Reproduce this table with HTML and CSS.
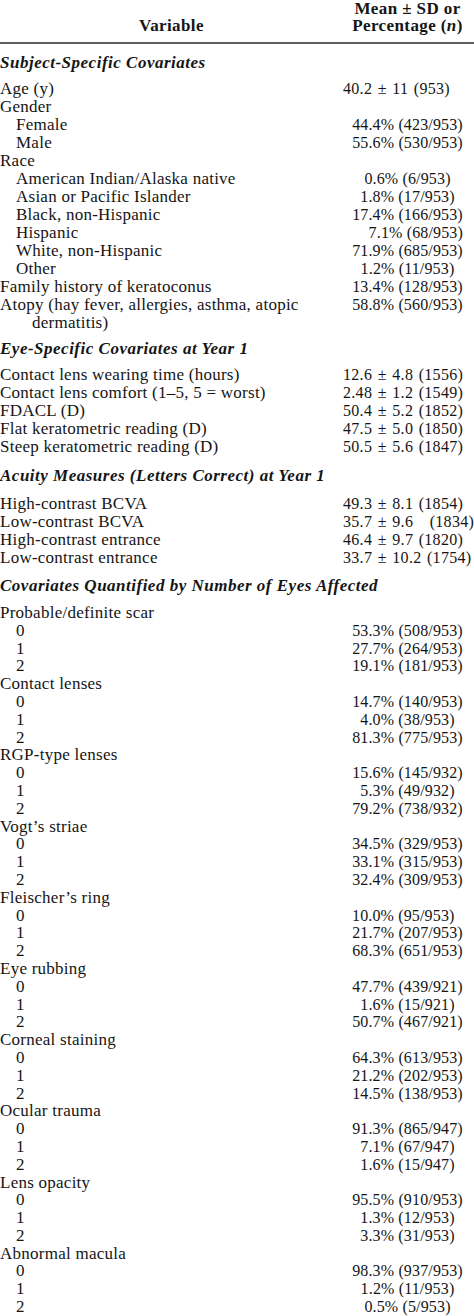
FILE: index.html
```
<!DOCTYPE html>
<html lang="en">
<head>
<meta charset="utf-8">
<title>Covariates table</title>
<link rel="stylesheet" href="styles.css">
</head>
<body>
<div class="table">
  <div class="head">
    <div class="head-var">Variable</div>
    <div class="head-val">Mean ± SD or<br>Percentage (<i>n</i>)</div>
  </div>
  <div class="rule"></div>

  <section class="sec sec-subject">
    <div class="heading">Subject-Specific Covariates</div>
    <div class="row"><div class="lab">Age (y)</div><div class="val pm">40.2 ± 11 (953)</div></div>
    <div class="row"><div class="lab">Gender</div><div class="val"></div></div>
    <div class="row"><div class="lab i1">Female</div><div class="val">44.4% (423/953)</div></div>
    <div class="row"><div class="lab i1">Male</div><div class="val">55.6% (530/953)</div></div>
    <div class="row"><div class="lab">Race</div><div class="val"></div></div>
    <div class="row"><div class="lab i1">American Indian/Alaska native</div><div class="val">0.6% (6/953)</div></div>
    <div class="row"><div class="lab i1">Asian or Pacific Islander</div><div class="val">1.8% (17/953)</div></div>
    <div class="row"><div class="lab i1">Black, non-Hispanic</div><div class="val">17.4% (166/953)</div></div>
    <div class="row"><div class="lab i1">Hispanic</div><div class="val r">7.1% (68/953)</div></div>
    <div class="row"><div class="lab i1">White, non-Hispanic</div><div class="val">71.9% (685/953)</div></div>
    <div class="row"><div class="lab i1">Other</div><div class="val">1.2% (11/953)</div></div>
    <div class="row"><div class="lab">Family history of keratoconus</div><div class="val">13.4% (128/953)</div></div>
    <div class="row"><div class="lab hang">Atopy (hay fever, allergies, asthma, atopic<br>dermatitis)</div><div class="val">58.8% (560/953)</div></div>
  </section>

  <section class="sec sec-eye">
    <div class="heading">Eye-Specific Covariates at Year 1</div>
    <div class="row"><div class="lab">Contact lens wearing time (hours)</div><div class="val pm">12.6 ± 4.8 (1556)</div></div>
    <div class="row"><div class="lab">Contact lens comfort (1–5, 5 = worst)</div><div class="val pm">2.48 ± 1.2 (1549)</div></div>
    <div class="row"><div class="lab">FDACL (D)</div><div class="val pm">50.4 ± 5.2 (1852)</div></div>
    <div class="row"><div class="lab">Flat keratometric reading (D)</div><div class="val pm">47.5 ± 5.0 (1850)</div></div>
    <div class="row"><div class="lab">Steep keratometric reading (D)</div><div class="val pm">50.5 ± 5.6 (1847)</div></div>
  </section>

  <section class="sec sec-acuity">
    <div class="heading">Acuity Measures (Letters Correct) at Year 1</div>
    <div class="row"><div class="lab">High-contrast BCVA</div><div class="val pm">49.3 ± 8.1 (1854)</div></div>
    <div class="row"><div class="lab">Low-contrast BCVA</div><div class="val pm">35.7 ± 9.6   (1834)</div></div>
    <div class="row"><div class="lab">High-contrast entrance</div><div class="val pm">46.4 ± 9.7 (1820)</div></div>
    <div class="row"><div class="lab">Low-contrast entrance</div><div class="val pm">33.7 ± 10.2 (1754)</div></div>
  </section>

  <section class="sec sec-eyes">
    <div class="heading">Covariates Quantified by Number of Eyes Affected</div>
    <div class="row"><div class="lab">Probable/definite scar</div><div class="val"></div></div>
    <div class="row"><div class="lab i1">0</div><div class="val">53.3% (508/953)</div></div>
    <div class="row"><div class="lab i1">1</div><div class="val">27.7% (264/953)</div></div>
    <div class="row"><div class="lab i1">2</div><div class="val">19.1% (181/953)</div></div>
    <div class="row"><div class="lab">Contact lenses</div><div class="val"></div></div>
    <div class="row"><div class="lab i1">0</div><div class="val">14.7% (140/953)</div></div>
    <div class="row"><div class="lab i1">1</div><div class="val">4.0% (38/953)</div></div>
    <div class="row"><div class="lab i1">2</div><div class="val">81.3% (775/953)</div></div>
    <div class="row"><div class="lab">RGP-type lenses</div><div class="val"></div></div>
    <div class="row"><div class="lab i1">0</div><div class="val">15.6% (145/932)</div></div>
    <div class="row"><div class="lab i1">1</div><div class="val">5.3% (49/932)</div></div>
    <div class="row"><div class="lab i1">2</div><div class="val">79.2% (738/932)</div></div>
    <div class="row"><div class="lab">Vogt’s striae</div><div class="val"></div></div>
    <div class="row"><div class="lab i1">0</div><div class="val">34.5% (329/953)</div></div>
    <div class="row"><div class="lab i1">1</div><div class="val">33.1% (315/953)</div></div>
    <div class="row"><div class="lab i1">2</div><div class="val">32.4% (309/953)</div></div>
    <div class="row"><div class="lab">Fleischer’s ring</div><div class="val"></div></div>
    <div class="row"><div class="lab i1">0</div><div class="val l">10.0% (95/953)</div></div>
    <div class="row"><div class="lab i1">1</div><div class="val">21.7% (207/953)</div></div>
    <div class="row"><div class="lab i1">2</div><div class="val">68.3% (651/953)</div></div>
    <div class="row"><div class="lab">Eye rubbing</div><div class="val"></div></div>
    <div class="row"><div class="lab i1">0</div><div class="val">47.7% (439/921)</div></div>
    <div class="row"><div class="lab i1">1</div><div class="val">1.6% (15/921)</div></div>
    <div class="row"><div class="lab i1">2</div><div class="val">50.7% (467/921)</div></div>
    <div class="row"><div class="lab">Corneal staining</div><div class="val"></div></div>
    <div class="row"><div class="lab i1">0</div><div class="val">64.3% (613/953)</div></div>
    <div class="row"><div class="lab i1">1</div><div class="val">21.2% (202/953)</div></div>
    <div class="row"><div class="lab i1">2</div><div class="val">14.5% (138/953)</div></div>
    <div class="row"><div class="lab">Ocular trauma</div><div class="val"></div></div>
    <div class="row"><div class="lab i1">0</div><div class="val">91.3% (865/947)</div></div>
    <div class="row"><div class="lab i1">1</div><div class="val">7.1% (67/947)</div></div>
    <div class="row"><div class="lab i1">2</div><div class="val">1.6% (15/947)</div></div>
    <div class="row"><div class="lab">Lens opacity</div><div class="val"></div></div>
    <div class="row"><div class="lab i1">0</div><div class="val">95.5% (910/953)</div></div>
    <div class="row"><div class="lab i1">1</div><div class="val">1.3% (12/953)</div></div>
    <div class="row"><div class="lab i1">2</div><div class="val">3.3% (31/953)</div></div>
    <div class="row"><div class="lab">Abnormal macula</div><div class="val"></div></div>
    <div class="row"><div class="lab i1">0</div><div class="val">98.3% (937/953)</div></div>
    <div class="row"><div class="lab i1">1</div><div class="val">1.2% (11/953)</div></div>
    <div class="row"><div class="lab i1">2</div><div class="val">0.5% (5/953)</div></div>
  </section>
</div>
</body>
</html>
```

FILE: styles.css
```
html, body {
  margin: 0;
  padding: 0;
  background: #ffffff;
  overflow: hidden;
}

body {
  width: 474px;
  font-family: "Liberation Serif", "Times New Roman", serif;
  font-size: 16px;
  color: #151515;
}

.table {
  width: 474px;
}

.head {
  display: grid;
  grid-template-columns: 1fr 131px;
  align-items: end;
  font-weight: bold;
  font-size: 17px;
  letter-spacing: 0.4px;
  line-height: 17px;
}

.head-var {
  text-align: center;
}

.head-val {
  text-align: center;
  padding: 0 8px 0 6px;
  white-space: nowrap;
}

.rule {
  margin-top: 8px;
  height: 2px;
  background: #5e5e5e;
}

.sec-subject { margin-top: 10px; }
.sec-eye { margin-top: 8px; }
.sec-acuity { margin-top: 11px; }
.sec-eyes { margin-top: 10px; }

.heading {
  font-weight: bold;
  font-style: italic;
  font-size: 17px;
  letter-spacing: 0.5px;
  line-height: 18px;
  margin-bottom: 8px;
  white-space: nowrap;
}

.sec-acuity .heading { margin-bottom: 10px; }
.sec-eyes .heading { margin-bottom: 9px; }

.row {
  display: grid;
  grid-template-columns: 1fr 131px;
  line-height: 18px;
}

.sec-eyes .row {
  line-height: 17.8px;
}

.lab {
  padding-left: 0;
  font-size: 17px;
  letter-spacing: 0.25px;
  white-space: nowrap;
}

.lab.i1 {
  padding-left: 16px;
}

.lab.hang {
  padding-left: 32px;
  text-indent: -32px;
}

.val {
  text-align: center;
  padding: 0 11px 0 9px;
  white-space: nowrap;
  letter-spacing: 0.15px;
}

.val.r { text-align: right; }
.val.l { text-align: left; }

.val.pm {
  text-align: left;
  padding: 0;
  white-space: pre;
  letter-spacing: 0.3px;
  word-spacing: 1.2px;
}
```
